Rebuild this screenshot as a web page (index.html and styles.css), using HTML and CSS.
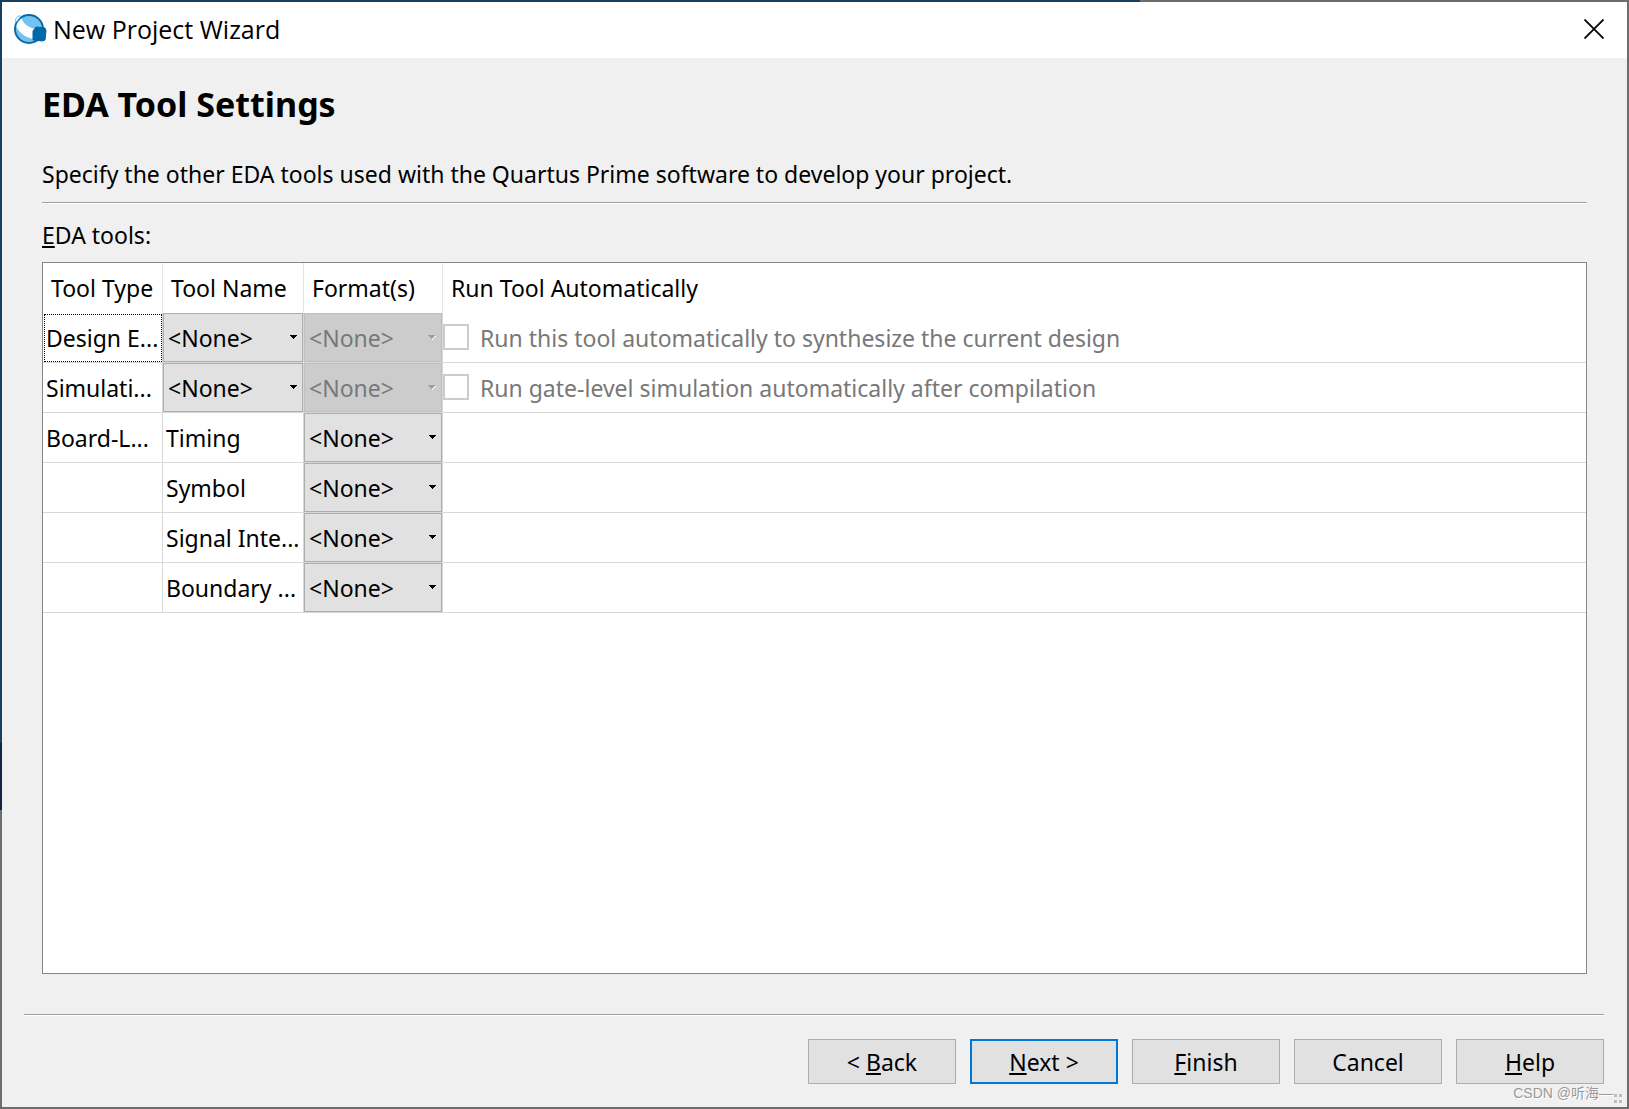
FILE: index.html
```html
<!DOCTYPE html>
<html lang="en">
<head>
<meta charset="utf-8">
<title>New Project Wizard</title>
<link rel="stylesheet" href="styles.css">
</head>
<body>
<div class="window">
  <header class="titlebar">
    <svg class="app-icon" width="33" height="30" viewBox="0 0 33 30" aria-hidden="true">
      <circle cx="15" cy="15" r="14" fill="#72c4ee"/>
      <path d="M1 7 L7 2 C8 8 13 14 23 15 L19 25 C10 23 3 17 1 9 Z" fill="#fff"/>
      <circle cx="15" cy="15" r="14" fill="none" stroke="#0a6aa6" stroke-width="2"/>
      <path d="M2 8 L7 2 L4 2 L1 6Z" fill="#fff" stroke="#72c4ee" stroke-width="1"/>
      <path d="M22 13 L31 14 L32 17 L31 26 L28 27 L19 26 L19 17Z" fill="#0068a8" stroke="#0068a8" stroke-linejoin="round"/>
    </svg>
    <span class="title">New Project Wizard</span>
    <button class="close" type="button" aria-label="Close">
      <svg width="20" height="20" viewBox="0 0 20 20"><path d="M0.500 0.500 L19.500 19.500 M19.500 0.500 L0.500 19.500" stroke="#000" stroke-width="1.800"/></svg>
    </button>
  </header>
  <main class="page">
    <h1>EDA Tool Settings</h1>
    <p class="intro">Specify the other EDA tools used with the Quartus Prime software to develop your project.</p>
    <p class="caption" id="tools-caption"><u>E</u>DA tools:</p>
    <div class="table-frame">
      <table aria-labelledby="tools-caption">
        <colgroup><col class="col-type"><col class="col-name"><col class="col-format"><col></colgroup>
        <thead>
          <tr><th>Tool Type</th><th>Tool Name</th><th>Format(s)</th><th>Run Tool Automatically</th></tr>
        </thead>
        <tbody>
          <tr>
            <td class="current">Design E...</td>
            <td class="field"><select aria-label="Design entry tool name"><option>&lt;None&gt;</option></select></td>
            <td class="field"><select aria-label="Design entry format" disabled><option>&lt;None&gt;</option></select></td>
            <td class="field"><label class="check"><input type="checkbox" disabled>Run this tool automatically to synthesize the current design</label></td>
          </tr>
          <tr>
            <td>Simulati...</td>
            <td class="field"><select aria-label="Simulation tool name"><option>&lt;None&gt;</option></select></td>
            <td class="field"><select aria-label="Simulation format" disabled><option>&lt;None&gt;</option></select></td>
            <td class="field"><label class="check"><input type="checkbox" disabled>Run gate-level simulation automatically after compilation</label></td>
          </tr>
          <tr>
            <td>Board-L...</td><td>Timing</td>
            <td class="field"><select aria-label="Timing format"><option>&lt;None&gt;</option></select></td><td></td>
          </tr>
          <tr>
            <td></td><td>Symbol</td>
            <td class="field"><select aria-label="Symbol format"><option>&lt;None&gt;</option></select></td><td></td>
          </tr>
          <tr>
            <td></td><td>Signal Inte...</td>
            <td class="field"><select aria-label="Signal integrity format"><option>&lt;None&gt;</option></select></td><td></td>
          </tr>
          <tr>
            <td></td><td>Boundary ...</td>
            <td class="field"><select aria-label="Boundary scan format"><option>&lt;None&gt;</option></select></td><td></td>
          </tr>
        </tbody>
      </table>
    </div>
  </main>
  <footer class="actions">
    <button type="button">&lt; <u>B</u>ack</button>
    <button type="button" class="default"><u>N</u>ext &gt;</button>
    <button type="button"><u>F</u>inish</button>
    <button type="button">Cancel</button>
    <button type="button"><u>H</u>elp</button>
  </footer>
  <span class="watermark">CSDN @听海—</span>
  <svg class="grip" width="8" height="9" viewBox="0 0 8 9" aria-hidden="true"><path d="M0 0h3v3H0zM5 0h3v3H5zM0 6h3v3H0zM5 6h3v3H5z" fill="#bdbdbd"/></svg>
</div>
</body>
</html>
```
FILE: styles.css
```css
* { box-sizing: border-box; }

body {
  margin: 0;
  font: 23px/32px "Noto Sans", "Noto Sans CJK SC", sans-serif;
  color: #000;
}

h1, p { margin: 0; }

u { text-underline-offset: 2px; text-decoration-skip-ink: none; text-decoration-thickness: 2px; }

.window {
  position: relative;
  display: flex;
  flex-direction: column;
  min-height: 100vh;
  padding: 2px;
  background:
    linear-gradient(90deg, #1a3e5e 70%, #6d6d6d 70%) top / 100% 2px no-repeat,
    linear-gradient(#1a3e5e 67%, #14253f 67%, #14253f 73%, #6d6d6d 73%) left / 2px 100% no-repeat,
    #6d6d6d;
}

.titlebar {
  display: flex;
  align-items: center;
  height: 56px;
  padding: 0 23px 2px 12px;
  background: #fff;
}

.title {
  margin-left: 6px;
  font-family: "Open Sans", sans-serif;
  font-size: 25px;
}

.close {
  display: flex;
  margin-left: auto;
  padding: 0;
  border: 0;
  background: none;
}

.page {
  display: flex;
  flex: 1;
  flex-direction: column;
  padding: 23px 40px 40px;
  background: #f0f0f0;
}

h1 { font-size: 34px; line-height: 46px; }

.intro {
  margin-top: 31px;
  padding-bottom: 12px;
  border-bottom: 1px solid #a0a0a0;
  box-shadow: 0 1px #fff;
}

.caption { margin: 16px 0 11px; }

.table-frame {
  flex: 1;
  border: 1px solid #828790;
  background: #fff;
}

table {
  width: 100%;
  table-layout: fixed;
  border-collapse: separate;
  border-spacing: 0;
}

.col-type { width: 120px; }
.col-name { width: 141px; }
.col-format { width: 139px; }

th, td {
  height: 50px;
  padding: 0 0 0 3px;
  border-right: 1px solid #d8d8d8;
  text-align: left;
  white-space: nowrap;
}

th { padding-left: 8px; border-color: #e5e5e5; font-weight: 400; }
td { border-bottom: 1px solid #d8d8d8; }
th:last-child, td:last-child { border-right: 0; }

.current { outline: 1px dotted #000; outline-offset: -2px; }
.field { padding: 0; }

select {
  display: block;
  width: 100%;
  height: 49px;
  padding: 0 4px;
  border: 1px solid #adadad;
  border-radius: 0;
  appearance: none;
  background: #e1e1e1 url("data:image/svg+xml,%3Csvg xmlns='http://www.w3.org/2000/svg' width='7' height='4'%3E%3Cpath d='M0 0h7v1H6v1H5v1H4v1H3V3H2V2H1V1H0z'/%3E%3C/svg%3E") right 5px top 21px no-repeat;
  color: #000;
  font: inherit;
}

select:disabled {
  border-color: #bfbfbf;
  background-color: #ccc;
  background-image: url("data:image/svg+xml,%3Csvg xmlns='http://www.w3.org/2000/svg' width='8' height='5'%3E%3Cpath fill='%23fff' d='M7 1h1v1H7v1H6v1H5v1H4V4h1V3h1V2h1z'/%3E%3Cpath fill='%23a0a0a0' d='M0 0h7v1H6v1H5v1H4v1H3V3H2V2H1V1H0z'/%3E%3C/svg%3E");
  color: #787878;
  opacity: 1;
}

.check {
  display: flex;
  align-items: center;
  gap: 11px;
  color: #787878;
}

.check input {
  width: 26px;
  height: 26px;
  margin: 0 0 2px;
  border: 2px solid #ccc;
  appearance: none;
  background: #fff;
}

.actions {
  display: flex;
  justify-content: flex-end;
  gap: 14px;
  padding: 25px 23px 23px 0;
  background: linear-gradient(#a0a0a0 1px, #fff 1px, #fff 2px, transparent 2px) 22px 0 / calc(100% - 45px) 2px no-repeat, #f0f0f0;
}

.actions button {
  width: 148px;
  height: 45px;
  padding: 0;
  border: 1px solid #adadad;
  background: #e1e1e1;
  color: #000;
  font: inherit;
}

.actions .default { border: 2px solid #0078d7; }

.watermark {
  position: absolute;
  right: 16px;
  bottom: 6px;
  color: #999;
  font: 14px/20px "Liberation Sans", "Noto Sans CJK SC", sans-serif;
  text-shadow: 1px 1px #fff;
}

.grip { position: absolute; right: 7px; bottom: 6px; }
```
